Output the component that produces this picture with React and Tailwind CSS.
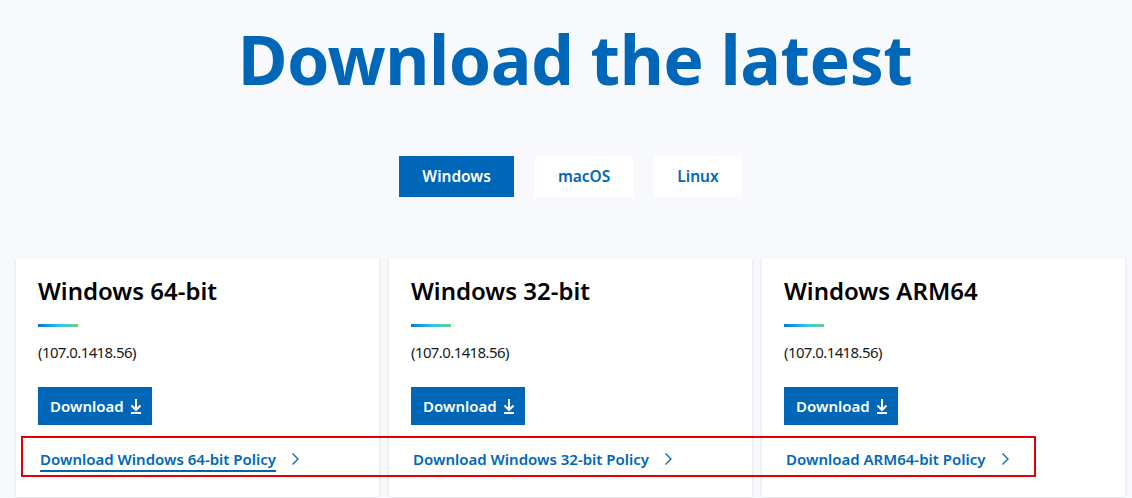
const platforms = ['Windows', 'macOS', 'Linux']

const builds = [
  { title: 'Windows 64-bit', version: '(107.0.1418.56)', policy: 'Download Windows 64-bit Policy', active: true },
  { title: 'Windows 32-bit', version: '(107.0.1418.56)', policy: 'Download Windows 32-bit Policy' },
  { title: 'Windows ARM64', version: '(107.0.1418.56)', policy: 'Download ARM64-bit Policy' },
]

function DownloadArrow() {
  return (
    <svg width="12" height="16" viewBox="0 0 12 16" fill="none" stroke="currentColor" strokeWidth="2">
      <path d="M6 1v11M1.5 7.5 6 12l4.5-4.5M1 15h10" />
    </svg>
  )
}

function Chevron() {
  return (
    <svg width="8" height="14" viewBox="0 0 8 14" fill="none" stroke="#0067b8" strokeWidth="1.3">
      <path d="M1.5 1.5 7 7l-5.5 5.5" />
    </svg>
  )
}

function BuildCard({ title, version, policy, active }) {
  return (
    <div className="flex-1 h-[239px] bg-white shadow-[0_1px_3px_rgba(0,0,0,0.13)] px-[22px] pt-[17px]">
      <h2 className="text-[24px] font-semibold text-black leading-[32px]">{title}</h2>
      <div className="mt-[17px] w-[40px] h-[3px] bg-[linear-gradient(90deg,#0a74d6,#2ec6ee_55%,#73ce78)]" />
      <p className="mt-[13px] text-[15px] tracking-[-0.6px] text-[#1a1a1a] leading-[24px]">{version}</p>
      <button className="mt-[23px] h-[38px] pl-[12px] pr-[10px] bg-[#0067b8] text-white text-[15px] font-semibold flex items-center gap-[6px]">
        Download <DownloadArrow />
      </button>
      <div className="mt-[23px] flex items-center gap-[15px] pl-[2px]">
        <span
          className={`text-[15px] font-semibold text-[#0067b8] leading-[22px] ${active ? 'underline decoration-2 underline-offset-[5px]' : ''}`}
        >
          {policy}
        </span>
        <Chevron />
      </div>
    </div>
  )
}

export default function App() {
  return (
    <div className="relative w-[1132px] h-[498px] overflow-hidden bg-[#f8f9fd] font-['Noto_Sans','Open_Sans',sans-serif]">
      <h1 className="pt-[14px] pl-[18px] text-center text-[68px] font-bold text-[#0067b8] leading-[90px] tracking-[-0.5px]">
        Download the latest
      </h1>

      <div className="mt-[52px] pl-[9px] flex justify-center gap-[21px]">
        {platforms.map((p, i) => (
          <button
            key={p}
            className={`h-[41px] px-[23px] text-[15.5px] font-semibold ${
              i === 0 ? 'bg-[#0067b8] text-white' : 'bg-white text-[#0067b8]'
            }`}
          >
            {p}
          </button>
        ))}
      </div>

      <div className="mt-[61px] flex gap-[10px] px-[16px] pr-[7px]">
        {builds.map(b => (
          <BuildCard key={b.title} {...b} />
        ))}
      </div>

      {/* annotation box */}
      <div className="absolute left-[21px] top-[436px] w-[1015px] h-[41px] border-2 border-[#e30000]" />
    </div>
  )
}
